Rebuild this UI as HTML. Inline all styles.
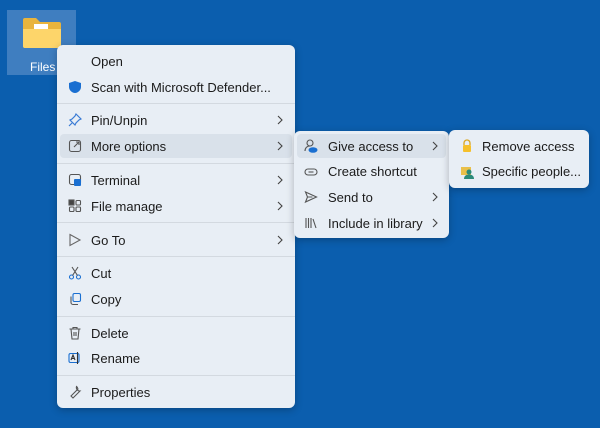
<!DOCTYPE html>
<html><head><meta charset="utf-8"><style>
*{margin:0;padding:0;box-sizing:border-box}
body{width:600px;height:428px;background:#0b5eae;position:relative;overflow:hidden;font-family:"Segoe UI","Liberation Sans",sans-serif;font-size:13px;color:#1b1b1b}
.sel{position:absolute;left:7px;top:10px;width:69px;height:65px;background:#3f7ec0}
.fl{position:absolute;left:30px;top:60px;color:#fff;font-size:12px}
.menu{position:absolute;background:#e8eef5;border-radius:6px;box-shadow:0 2px 8px rgba(0,0,0,.25)}
.it{position:absolute;height:18px;line-height:18px;white-space:nowrap;margin-top:1px}
.ic{position:absolute;width:14px;height:14px}
.ch{position:absolute;width:6px;height:10px}
.sep{position:absolute;height:1px;background:#d3d9e0}
.hl{position:absolute;background:#d9e1ea;border-radius:4px}
</style></head><body>
<div class="sel"></div>
<svg style="position:absolute;left:22px;top:17px" width="40" height="32" viewBox="0 0 40 32">
<path d="M1 3a2 2 0 0 1 2-2h11l4 4h19a2 2 0 0 1 2 2v22a2 2 0 0 1-2 2H3a2 2 0 0 1-2-2z" fill="#e9b43c"/>
<rect x="12" y="7" width="14" height="10" fill="#fff"/>
<path d="M1 12h38v17a2 2 0 0 1-2 2H3a2 2 0 0 1-2-2z" fill="#fdd56a"/></svg>
<div class="fl">Files</div>

<div class="menu" style="left:57px;top:45px;width:238px;height:363px">
<div class="hl" style="left:3px;top:89px;width:232px;height:24px"></div>
<div class="sep" style="left:0;top:58px;width:238px"></div>
<div class="sep" style="left:0;top:118px;width:238px"></div>
<div class="sep" style="left:0;top:177px;width:238px"></div>
<div class="sep" style="left:0;top:211px;width:238px"></div>
<div class="sep" style="left:0;top:271px;width:238px"></div>
<div class="sep" style="left:0;top:330px;width:238px"></div>
</div>
<div class="it" style="left:91px;top:52px">Open</div>
<svg class="ic" style="left:68px;top:80px" viewBox="0 0 14 14"><path d="M7 1l6 2v4c0 3-3 6-6 6S1 10 1 7V3z" fill="#1a6fd1"/></svg>
<div class="it" style="left:91px;top:78px">Scan with Microsoft Defender...</div>
<svg class="ic" style="left:68px;top:113px" viewBox="0 0 14 14" fill="none" stroke="#3a7bd5" stroke-width="1.2"><path d="M8 1l5 5-2 1-3 3-1 2-5-5 2-1 3-3zM4 10l-3 3"/></svg>
<div class="it" style="left:91px;top:111px">Pin/Unpin</div>
<svg class="ic" style="left:68px;top:139px" viewBox="0 0 14 14" fill="none" stroke="#555" stroke-width="1.1"><rect x="1.5" y="1.5" width="11" height="11" rx="2"/><path d="M6 8l5-5M8 3h3v3"/></svg>
<div class="it" style="left:91px;top:137px">More options</div>
<svg class="ic" style="left:68px;top:173px" viewBox="0 0 14 14"><rect x="1.5" y="1.5" width="11" height="10" rx="2" fill="none" stroke="#555" stroke-width="1.1"/><rect x="6" y="6" width="7" height="7" rx="1" fill="#1a6fd1"/></svg>
<div class="it" style="left:91px;top:171px">Terminal</div>
<svg class="ic" style="left:68px;top:199px" viewBox="0 0 14 14" fill="none" stroke="#555" stroke-width="1.1"><rect x="1" y="1" width="5" height="5" fill="#444"/><rect x="8" y="1.5" width="4.5" height="4.5" rx="1"/><rect x="1.5" y="8" width="4.5" height="4.5" rx="1"/><rect x="8" y="8" width="4.5" height="4.5" rx="1"/></svg>
<div class="it" style="left:91px;top:197px">File manage</div>
<svg class="ic" style="left:68px;top:233px" viewBox="0 0 14 14" fill="none" stroke="#666" stroke-width="1.1"><path d="M2 1.5l10 5.5-10 5.5z"/></svg>
<div class="it" style="left:91px;top:231px">Go To</div>
<svg class="ic" style="left:68px;top:266px" viewBox="0 0 14 14" fill="none" stroke="#1a6fd1" stroke-width="1.1"><circle cx="3.5" cy="11" r="2"/><circle cx="10.5" cy="11" r="2"/><path d="M4.5 9.5L10 1M9.5 9.5L4 1" stroke="#555"/></svg>
<div class="it" style="left:91px;top:264px">Cut</div>
<svg class="ic" style="left:68px;top:292px" viewBox="0 0 14 14" fill="none" stroke="#555" stroke-width="1.1"><rect x="5" y="1.5" width="7.5" height="8" rx="1.5" stroke="#1a6fd1"/><path d="M3 4.5v6a2 2 0 0 0 2 2h5"/></svg>
<div class="it" style="left:91px;top:290px">Copy</div>
<svg class="ic" style="left:68px;top:326px" viewBox="0 0 14 14" fill="none" stroke="#555" stroke-width="1.1"><path d="M1.5 3h11M5 3V1.5h4V3M3 3l1 10h6l1-10M6 6v4M8 6v4"/></svg>
<div class="it" style="left:91px;top:324px">Delete</div>
<svg class="ic" style="left:68px;top:351px" viewBox="0 0 14 14" fill="none" stroke="#1a6fd1" stroke-width="1.1"><rect x="1" y="2.5" width="10" height="9" rx="1.5"/><path d="M3 9l2-5 2 5M3.7 7.5h2.6M9.5 1v12" stroke="#333"/></svg>
<div class="it" style="left:91px;top:349px">Rename</div>
<svg class="ic" style="left:68px;top:385px" viewBox="0 0 14 14" fill="none" stroke="#555" stroke-width="1.1"><path d="M8.5 1.5a3.5 3.5 0 0 0 3.5 4.5L5 13l-2-2 7-7A3.5 3.5 0 0 0 8.5 1.5z"/></svg>
<div class="it" style="left:91px;top:383px">Properties</div>
<svg class="ch" style="left:277px;top:115px" viewBox="0 0 6 10"><path d="M1 1l4 4-4 4" fill="none" stroke="#444" stroke-width="1.1"/></svg>
<svg class="ch" style="left:277px;top:141px" viewBox="0 0 6 10"><path d="M1 1l4 4-4 4" fill="none" stroke="#444" stroke-width="1.1"/></svg>
<svg class="ch" style="left:277px;top:175px" viewBox="0 0 6 10"><path d="M1 1l4 4-4 4" fill="none" stroke="#444" stroke-width="1.1"/></svg>
<svg class="ch" style="left:277px;top:201px" viewBox="0 0 6 10"><path d="M1 1l4 4-4 4" fill="none" stroke="#444" stroke-width="1.1"/></svg>
<svg class="ch" style="left:277px;top:235px" viewBox="0 0 6 10"><path d="M1 1l4 4-4 4" fill="none" stroke="#444" stroke-width="1.1"/></svg>

<div class="menu" style="left:294px;top:131px;width:155px;height:107px">
<div class="hl" style="left:3px;top:3px;width:149px;height:24px"></div>
</div>
<svg class="ic" style="left:304px;top:139px" viewBox="0 0 14 14"><circle cx="6" cy="4" r="3" fill="none" stroke="#555" stroke-width="1.1"/><path d="M1 12c0-3 2-5 5-5" fill="none" stroke="#555" stroke-width="1.1"/><ellipse cx="9" cy="11" rx="4.5" ry="2.8" fill="#1a6fd1"/></svg>
<div class="it" style="left:328px;top:137px">Give access to</div>
<svg class="ic" style="left:304px;top:165px" viewBox="0 0 14 14" fill="none" stroke="#555" stroke-width="1.1"><rect x="1" y="4" width="12" height="6" rx="3"/><path d="M4.5 7h5"/></svg>
<div class="it" style="left:328px;top:162px">Create shortcut</div>
<svg class="ic" style="left:304px;top:190px" viewBox="0 0 14 14" fill="none" stroke="#555" stroke-width="1.1"><path d="M1.5 2l11 5-11 5 2-5zM3.5 7h5"/></svg>
<div class="it" style="left:328px;top:188px">Send to</div>
<svg class="ic" style="left:304px;top:216px" viewBox="0 0 14 14" fill="none" stroke="#555" stroke-width="1.1"><path d="M2 2v10M4.5 2v10M7 2v10M9 3l3 9"/></svg>
<div class="it" style="left:328px;top:214px">Include in library</div>
<svg class="ch" style="left:432px;top:141px" viewBox="0 0 6 10"><path d="M1 1l4 4-4 4" fill="none" stroke="#444" stroke-width="1.1"/></svg>
<svg class="ch" style="left:432px;top:192px" viewBox="0 0 6 10"><path d="M1 1l4 4-4 4" fill="none" stroke="#444" stroke-width="1.1"/></svg>
<svg class="ch" style="left:432px;top:218px" viewBox="0 0 6 10"><path d="M1 1l4 4-4 4" fill="none" stroke="#444" stroke-width="1.1"/></svg>

<div class="menu" style="left:449px;top:130px;width:140px;height:58px"></div>
<svg class="ic" style="left:460px;top:139px" viewBox="0 0 14 14"><path d="M4 6V4a3 3 0 0 1 6 0v2" fill="none" stroke="#d9a520" stroke-width="1.3"/><rect x="3" y="6" width="8" height="7" rx="1" fill="#f5c02c"/></svg>
<div class="it" style="left:482px;top:137px">Remove access</div>
<svg class="ic" style="left:460px;top:165px" viewBox="0 0 14 14"><rect x="1" y="2" width="10" height="8" fill="#e9c04a"/><circle cx="9" cy="7" r="2.5" fill="#2a8a7a"/><path d="M4 14c0-3 2-4.5 5-4.5s5 1.5 5 4.5z" fill="#2a8a7a"/></svg>
<div class="it" style="left:482px;top:162px">Specific people...</div>
</body></html>
